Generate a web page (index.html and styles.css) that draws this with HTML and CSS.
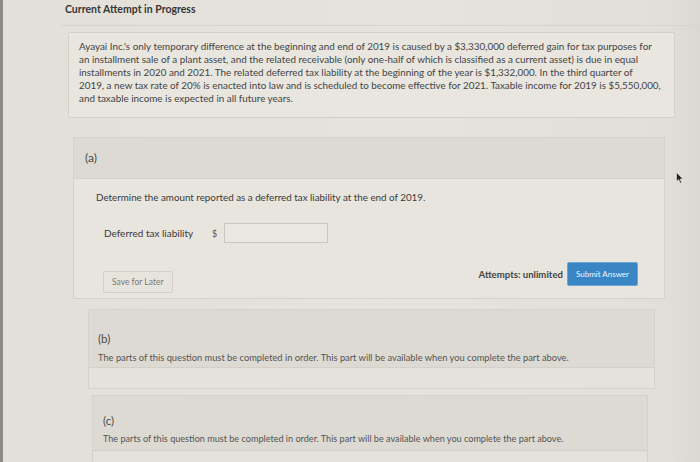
FILE: index.html
```html
<!DOCTYPE html>
<html>
<head>
<meta charset="utf-8">
<link rel="stylesheet" href="styles.css">
</head>
<body>
<div class="screen">
  <div class="title">Current Attempt in Progress</div>
  <div class="question">
    Ayayai Inc.'s only temporary difference at the beginning and end of 2019 is caused by a $3,330,000 deferred gain for tax purposes for<br>
    an installment sale of a plant asset, and the related receivable (only one-half of which is classified as a current asset) is due in equal<br>
    installments in 2020 and 2021. The related deferred tax liability at the beginning of the year is $1,332,000. In the third quarter of<br>
    2019, a new tax rate of 20% is enacted into law and is scheduled to become effective for 2021. Taxable income for 2019 is $5,550,000,<br>
    and taxable income is expected in all future years.
  </div>

  <div class="part part-a">
    <div class="part-head">(a)</div>
    <div class="part-body">
      <div class="prompt">Determine the amount reported as a deferred tax liability at the end of 2019.</div>
      <div class="field-row">
        <span class="field-label">Deferred tax liability</span>
        <span class="dollar">$</span>
        <span class="input"></span>
      </div>
      <div class="actions">
        <span class="btn-save">Save for Later</span>
        <div class="submit-group">
          <span class="attempts">Attempts: unlimited</span>
          <span class="btn-submit">Submit Answer</span>
        </div>
      </div>
    </div>
  </div>

  <div class="part part-b">
    <div class="part-head locked">
      <div class="letter">(b)</div>
      <div class="locked-text">The parts of this question must be completed in order. This part will be available when you complete the part above.</div>
    </div>
    <div class="strip"></div>
  </div>

  <div class="part part-c">
    <div class="part-head locked">
      <div class="letter">(c)</div>
      <div class="locked-text">The parts of this question must be completed in order. This part will be available when you complete the part above.</div>
    </div>
    <div class="strip"></div>
  </div>

  <svg class="cursor" width="8" height="12" viewBox="0 0 8 12"><path d="M0.5 0.5 L0.5 9.5 L2.6 7.6 L4.2 11.2 L5.6 10.6 L4.1 7.1 L7 7.1 Z" fill="#222" stroke="#eee" stroke-width="0.6"/></svg>
</div>
</body>
</html>
```

FILE: styles.css
```css
* { box-sizing: border-box; }
html, body { margin: 0; padding: 0; }
body {
  width: 700px;
  height: 462px;
  overflow: hidden;
  background: #e3e1da;
  font-family: Lato, "Open Sans", sans-serif;
  color: #3a3a3a;
}
.screen {
  position: relative;
  height: 462px;
  border-left: 3px solid #8c8b87;
  background: linear-gradient(90deg, #e2e0d9 0%, #e5e3dc 60%, #e1dfd8 95%, #d9d8d2 100%);
}
.title {
  height: 26px;
  margin-left: 57px;
  padding: 3px 0 0 5px;
  font-size: 10.5px;
  font-weight: 700;
  line-height: 13px;
  color: #363636;
  border-bottom: 1px solid #d6d4cc;
}
.question {
  margin: 6px 25px 0 65px;
  height: 86px;
  padding: 7px 6px 0 10px;
  font-size: 9.85px;
  line-height: 13px;
  white-space: nowrap;
  color: #444;
  background: #e8e6df;
  border: 1px solid #d2d0c8;
  border-radius: 2px;
}
.part {
  border: 1px solid #d4d2ca;
}
.part-a {
  margin: 19px 35px 0 70px;
}
.part-head {
  height: 41px;
  padding: 12px 0 0 11px;
  font-size: 12px;
  line-height: 16px;
  color: #4a4a4a;
  background: #dcdad2;
  border-bottom: 1px solid #d2d0c8;
}
.part-body {
  background: #e7e5de;
  padding: 12px 26px 5px 22px;
}
.prompt {
  font-size: 9.8px;
  line-height: 13px;
  color: #3a3a3a;
}
.field-row {
  display: flex;
  align-items: center;
  margin-top: 19px;
  padding-left: 8px;
  height: 20px;
}
.field-label {
  font-size: 10px;
  color: #3a3a3a;
  width: 108px;
}
.dollar {
  font-size: 9px;
  color: #555;
  width: 12px;
}
.input {
  width: 104px;
  height: 20px;
  background: #e9e8e2;
  border: 1px solid #c8c6be;
}
.actions {
  display: flex;
  justify-content: space-between;
  align-items: flex-start;
  margin-top: 19px;
  padding-left: 7px;
}
.btn-save {
  display: flex;
  align-items: center;
  height: 22px;
  margin-top: 9px;
  padding: 0 8px;
  font-size: 8.5px;
  color: #7a7a76;
  background: #e6e4dd;
  border: 1px solid #d2d0c8;
  border-radius: 2px;
}
.submit-group {
  display: flex;
  align-items: center;
  gap: 4px;
}
.attempts {
  font-size: 9.6px;
  font-weight: 700;
  color: #444;
}
.btn-submit {
  display: flex;
  align-items: center;
  height: 24px;
  padding: 0 8px;
  font-size: 8px;
  color: #f2f6fa;
  background: #3a85c4;
  border: 1px solid #6ea5d4;
  border-radius: 2px;
}
.part-b {
  margin: 10px 45px 0 85px;
}
.part-c {
  margin: 6px 52px 0 89px;
}
.part-head.locked {
  height: 58px;
  padding: 21px 0 0 9px;
}
.part-c .part-head.locked {
  height: 55px;
  padding-top: 17px;
  padding-left: 10px;
}
.letter {
  font-size: 11.5px;
  line-height: 15px;
  color: #4a4a4a;
}
.locked-text {
  margin-top: 5px;
  font-size: 9.3px;
  line-height: 13px;
  color: #555;
}
.part-c .locked-text {
  margin-top: 4px;
  font-size: 9.1px;
}
.strip {
  height: 20px;
  background: #e4e2db;
}
.cursor {
  position: absolute;
  left: 673px;
  top: 172px;
}
```
